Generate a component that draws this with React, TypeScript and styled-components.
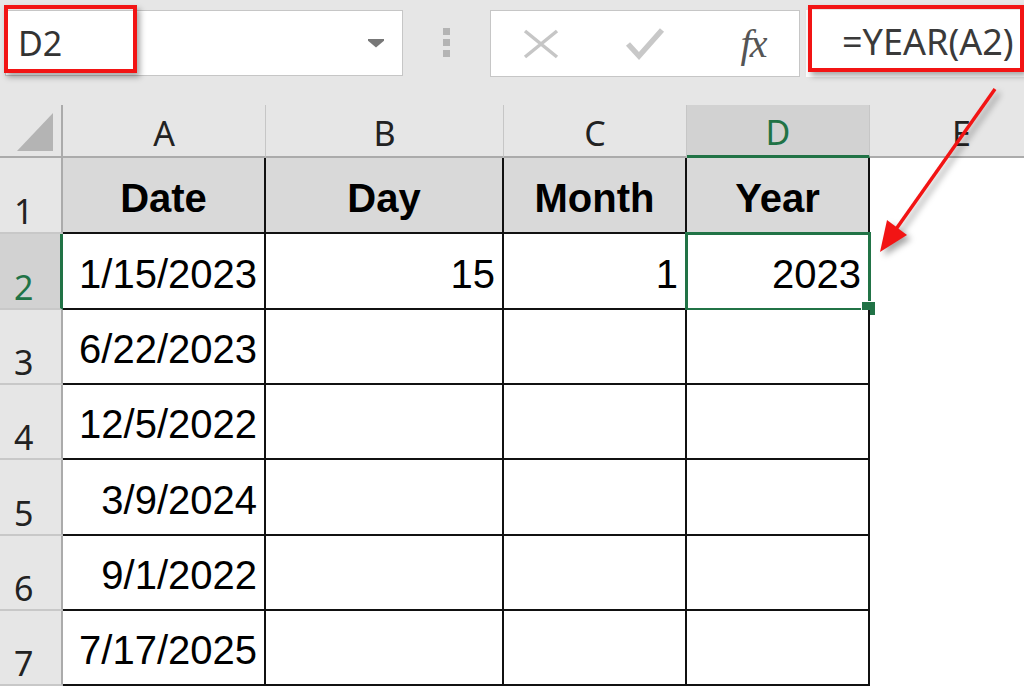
import React from 'react'
import styled, { createGlobalStyle, css } from 'styled-components'

const GREEN = '#217346'
const RED = '#f21414'

const GlobalStyle = createGlobalStyle`
    html, body {
        margin: 0;
        padding: 0;
        overflow: hidden;
        background: #ffffff;
    }
    * {
        box-sizing: border-box;
    }
`

const Page = styled.div`
    position: relative;
    width: 1024px;
    height: 686px;
    overflow: hidden;
    font-family: 'Noto Sans', 'DejaVu Sans', sans-serif;
`

const Toolbar = styled.div`
    display: flex;
    align-items: flex-start;
    height: 105px;
    padding: 10px 0 0 5px;
    background: #e6e6e6;
`

const NameBox = styled.div`
    position: relative;
    display: flex;
    align-items: center;
    justify-content: space-between;
    width: 398px;
    height: 66px;
    padding: 0 18px 0 12px;
    background: #ffffff;
    border: 1px solid #c6c6c6;
    color: #333333;
    font-size: 34px;
    line-height: 1;
`

const DropArrow = styled.div`
    width: 16px;
    height: 9px;
    background: #777777;
    clip-path: polygon(0 0, 100% 0, 100% 25%, 50% 100%, 0 25%);
`

const Highlight = styled.div<{ $left: number; $top: number; $width: number; $height: number }>`
    position: absolute;
    left: ${p => p.$left}px;
    top: ${p => p.$top}px;
    width: ${p => p.$width}px;
    height: ${p => p.$height}px;
    border: 4px solid ${RED};
    box-shadow: 3px 4px 6px rgba(0, 0, 0, 0.35);
    pointer-events: none;
`

const Grip = styled.div`
    display: flex;
    flex-direction: column;
    align-items: center;
    gap: 4px;
    width: 87px;
    padding-top: 18px;
`

const GripDot = styled.span`
    width: 7px;
    height: 7px;
    background: #b4b4b4;
`

const FormulaButtons = styled.div`
    display: flex;
    align-items: center;
    width: 310px;
    height: 67px;
    background: #ffffff;
    border: 1px solid #c6c6c6;
    padding-left: 32px;
`

const IconSlot = styled.div<{ $width: number }>`
    display: flex;
    align-items: center;
    justify-content: center;
    width: ${p => p.$width}px;
`

const FxLabel = styled.span`
    font-family: 'Liberation Serif', 'DejaVu Serif', serif;
    font-style: italic;
    font-size: 40px;
    line-height: 1;
    color: #555555;
    letter-spacing: -2px;
`

const FormulaInput = styled.div`
    position: relative;
    flex: 1;
    display: flex;
    align-items: center;
    height: 67px;
    margin-left: 6px;
    padding: 0 0 4px 36px;
    background: #ffffff;
    color: #3a3a3a;
    font-size: 36px;
    line-height: 1;
    white-space: nowrap;
`

const Sheet = styled.div`
    display: grid;
    grid-template-columns: 63px 203px 238px 183px 183px 183px;
    grid-template-rows: 53px 76px 76px 75px 75px 76px 75px 75px;
`

const Corner = styled.div`
    position: relative;
    background: #e6e6e6;
    border-right: 2px solid #ababab;
    border-bottom: 2px solid #ababab;
    &::after {
        content: '';
        position: absolute;
        right: 8px;
        bottom: 5px;
        width: 36px;
        height: 38px;
        background: #b4b4b4;
        clip-path: polygon(100% 0, 100% 100%, 0 100%);
    }
`

const ColHeader = styled.div<{ $selected?: boolean; $last?: boolean }>`
    display: flex;
    align-items: center;
    justify-content: center;
    padding-top: 4px;
    background: #e6e6e6;
    color: #222222;
    font-size: 34px;
    line-height: 1;
    border-right: ${p => (p.$last ? 'none' : '1px solid #c6c6c6')};
    border-bottom: 2px solid #ababab;
    ${p =>
        p.$selected &&
        css`
            background: #d2d2d2;
            color: ${GREEN};
            border-bottom: 3px solid ${GREEN};
        `}
`

const RowHeader = styled.div<{ $selected?: boolean }>`
    display: flex;
    align-items: flex-end;
    padding: 0 0 4px 14px;
    background: #e6e6e6;
    color: #222222;
    font-size: 34px;
    line-height: 1;
    border-right: 2px solid #ababab;
    border-bottom: 2px solid #c8c8c8;
    ${p =>
        p.$selected &&
        css`
            background: #d2d2d2;
            color: ${GREEN};
            border-right: 3px solid ${GREEN};
        `}
`

const Cell = styled.div<{ $head?: boolean; $active?: boolean }>`
    position: relative;
    display: flex;
    align-items: flex-end;
    justify-content: ${p => (p.$head ? 'center' : 'flex-end')};
    padding: 0 7px 14px 7px;
    background: ${p => (p.$head ? '#d9d9d9' : '#ffffff')};
    color: #000000;
    font-family: 'Liberation Sans', Arial, sans-serif;
    font-size: 40px;
    font-weight: ${p => (p.$head ? 700 : 400)};
    line-height: 1;
    border-right: 2px solid #111111;
    border-bottom: 2px solid #111111;
    ${p =>
        p.$active &&
        css`
            &::before {
                content: '';
                position: absolute;
                left: -2px;
                top: -2px;
                right: -3px;
                bottom: -3px;
                border: 3px solid ${GREEN};
            }
            &::after {
                content: '';
                position: absolute;
                right: -8px;
                bottom: -8px;
                width: 13px;
                height: 13px;
                background: ${GREEN};
                border: 1px solid #ffffff;
            }
        `}
`

const EmptyCell = styled.div`
    background: #ffffff;
`

const ArrowLayer = styled.svg`
    position: absolute;
    left: 0;
    top: 0;
    pointer-events: none;
    filter: drop-shadow(4px 4px 3px rgba(0, 0, 0, 0.35));
`

const columns = ['A', 'B', 'C', 'D', 'E']

const rows: string[][] = [
    ['Date', 'Day', 'Month', 'Year'],
    ['1/15/2023', '15', '1', '2023'],
    ['6/22/2023', '', '', ''],
    ['12/5/2022', '', '', ''],
    ['3/9/2024', '', '', ''],
    ['9/1/2022', '', '', ''],
    ['7/17/2025', '', '', ''],
]

const CrossIcon = () => (
    <svg width="36" height="30" viewBox="0 0 36 30">
        <path d="M2 2 L34 28 M34 2 L2 28" stroke="#c6c6c6" strokeWidth="3.5" fill="none" />
    </svg>
)

const CheckIcon = () => (
    <svg width="40" height="34" viewBox="0 0 40 34">
        <path d="M3 17 L14 29 L37 3" stroke="#c8c8c8" strokeWidth="5.5" fill="none" />
    </svg>
)

export default function App() {
    return (
        <Page>
            <GlobalStyle />
            <Toolbar>
                <NameBox>
                    <span>D2</span>
                    <DropArrow />
                    <Highlight $left={-2} $top={-6} $width={133} $height={68} />
                </NameBox>
                <Grip>
                    <GripDot />
                    <GripDot />
                    <GripDot />
                </Grip>
                <FormulaButtons>
                    <IconSlot $width={36}>
                        <CrossIcon />
                    </IconSlot>
                    <IconSlot $width={172}>
                        <CheckIcon />
                    </IconSlot>
                    <IconSlot $width={44}>
                        <FxLabel>fx</FxLabel>
                    </IconSlot>
                </FormulaButtons>
                <FormulaInput>
                    =YEAR(A2)
                    <Highlight $left={2} $top={-5} $width={216} $height={67} />
                </FormulaInput>
            </Toolbar>

            <Sheet>
                <Corner />
                {columns.map((c, i) => (
                    <ColHeader key={c} $selected={c === 'D'} $last={i === columns.length - 1}>
                        {c}
                    </ColHeader>
                ))}
                {rows.map((row, r) => (
                    <React.Fragment key={r}>
                        <RowHeader $selected={r === 1}>{r + 1}</RowHeader>
                        {row.map((value, c) => (
                            <Cell key={c} $head={r === 0} $active={r === 1 && c === 3}>
                                {value}
                            </Cell>
                        ))}
                        <EmptyCell />
                    </React.Fragment>
                ))}
            </Sheet>

            <ArrowLayer width="1024" height="686" viewBox="0 0 1024 686">
                <line x1="995" y1="89" x2="894" y2="232" stroke={RED} strokeWidth="3.5" />
                <polygon points="880,252 907,235 887,220" fill={RED} />
            </ArrowLayer>
        </Page>
    )
}
